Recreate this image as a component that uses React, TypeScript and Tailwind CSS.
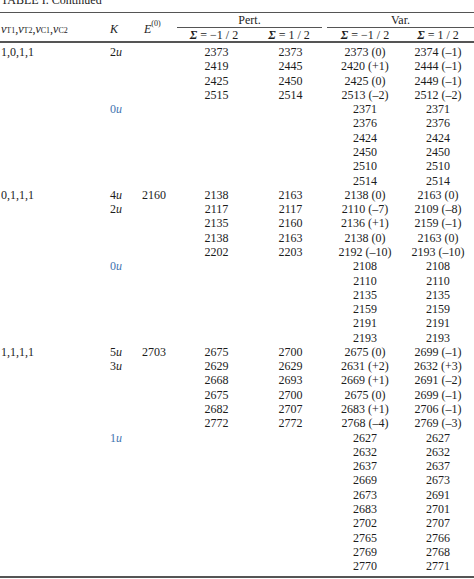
import type { ReactNode } from "react";

type Row = {
  v?: string;
  k?: string;
  e?: string;
  p1?: string;
  p2?: string;
  v1?: string;
  v2?: string;
  blue?: boolean;
};

const rows: Row[] = [
  { v: "1,0,1,1", k: "2", p1: "2373", p2: "2373", v1: "2373 (0)", v2: "2374 (–1)" },
  { p1: "2419", p2: "2445", v1: "2420 (+1)", v2: "2444 (–1)" },
  { p1: "2425", p2: "2450", v1: "2425 (0)", v2: "2449 (–1)" },
  { p1: "2515", p2: "2514", v1: "2513 (–2)", v2: "2512 (–2)" },
  { k: "0", blue: true, v1: "2371", v2: "2371" },
  { v1: "2376", v2: "2376" },
  { v1: "2424", v2: "2424" },
  { v1: "2450", v2: "2450" },
  { v1: "2510", v2: "2510" },
  { v1: "2514", v2: "2514" },
  { v: "0,1,1,1", k: "4", e: "2160", p1: "2138", p2: "2163", v1: "2138 (0)", v2: "2163 (0)" },
  { k: "2", p1: "2117", p2: "2117", v1: "2110 (–7)", v2: "2109 (–8)" },
  { p1: "2135", p2: "2160", v1: "2136 (+1)", v2: "2159 (–1)" },
  { p1: "2138", p2: "2163", v1: "2138 (0)", v2: "2163 (0)" },
  { p1: "2202", p2: "2203", v1: "2192 (–10)", v2: "2193 (–10)" },
  { k: "0", blue: true, v1: "2108", v2: "2108" },
  { v1: "2110", v2: "2110" },
  { v1: "2135", v2: "2135" },
  { v1: "2159", v2: "2159" },
  { v1: "2191", v2: "2191" },
  { v1: "2193", v2: "2193" },
  { v: "1,1,1,1", k: "5", e: "2703", p1: "2675", p2: "2700", v1: "2675 (0)", v2: "2699 (–1)" },
  { k: "3", p1: "2629", p2: "2629", v1: "2631 (+2)", v2: "2632 (+3)" },
  { p1: "2668", p2: "2693", v1: "2669 (+1)", v2: "2691 (–2)" },
  { p1: "2675", p2: "2700", v1: "2675 (0)", v2: "2699 (–1)" },
  { p1: "2682", p2: "2707", v1: "2683 (+1)", v2: "2706 (–1)" },
  { p1: "2772", p2: "2772", v1: "2768 (–4)", v2: "2769 (–3)" },
  { k: "1", blue: true, v1: "2627", v2: "2627" },
  { v1: "2632", v2: "2632" },
  { v1: "2637", v2: "2637" },
  { v1: "2669", v2: "2673" },
  { v1: "2673", v2: "2691" },
  { v1: "2683", v2: "2701" },
  { v1: "2702", v2: "2707" },
  { v1: "2765", v2: "2766" },
  { v1: "2769", v2: "2768" },
  { v1: "2770", v2: "2771" },
];

const cols = "grid grid-cols-[110px_32px_38px_73px_75px_74px_72px]";

function Sigma({ half }: { half: string }) {
  return (
    <span className="whitespace-pre">
      <i className="font-bold">Σ</i>
      {` = ${half} / 2`}
    </span>
  );
}

function V({ sub }: { sub: ReactNode }) {
  return (
    <>
      <i>v</i>
      <sub className="text-[8px] align-[-2px]">{sub}</sub>
    </>
  );
}

export default function App() {
  return (
    <div className="w-[474px] h-[579px] overflow-hidden bg-white text-[12px] text-[#1c1c1c] font-['Liberation_Serif','Times_New_Roman',serif]">
      <div className="-mt-[7px] leading-[14px] pl-[1px]">TABLE I. Continued</div>

      {/* 表头 */}
      <div className={`${cols} mt-[5px] h-[31px] border-t-[1.5px] border-b-[2px] border-[#555]`}>
        <div className="row-span-2 flex items-center pl-[1px] pt-[2px]">
          <V sub="T1" />,<V sub="T2" />,<V sub="C1" />,<V sub="C2" />
        </div>
        <div className="row-span-2 flex items-center pt-[2px]">
          <i>K</i>
        </div>
        <div className="row-span-2 flex items-center pl-[2px] pt-[1px]">
          <i>E</i>
          <sup className="text-[8px] -top-[5px]">(0)</sup>
        </div>
        <div className="col-span-2 -ml-[3px] mr-[6px] h-[15px] leading-[14px] text-center border-b border-[#555]">
          Pert.
        </div>
        <div className="col-span-2 -ml-[1px] h-[15px] leading-[14px] text-center border-b border-[#555]">
          Var.
        </div>
        <div className="leading-[15px] text-center -ml-[5px]">
          <Sigma half="−1" />
        </div>
        <div className="leading-[15px] text-center -ml-[3px]">
          <Sigma half="1" />
        </div>
        <div className="leading-[15px] text-center">
          <Sigma half="−1" />
        </div>
        <div className="leading-[15px] text-center">
          <Sigma half="1" />
        </div>
      </div>

      {/* 数据行 */}
      <div className="pt-[2px]">
        {rows.map((r, i) => (
          <div key={i} className={`${cols} h-[14.29px] leading-[14.29px] whitespace-nowrap`}>
            <div className="pl-[1px]">{r.v}</div>
            <div className={r.blue ? "text-[#3f74b0]" : ""}>
              {r.k && (
                <>
                  {r.k}
                  <i>u</i>
                </>
              )}
            </div>
            <div>{r.e}</div>
            <div className="text-center">{r.p1}</div>
            <div className="text-center">{r.p2}</div>
            <div className="text-center">{r.v1}</div>
            <div className="text-center">{r.v2}</div>
          </div>
        ))}
      </div>
      <div className="mt-[3px] border-t-[2px] border-[#555]" />
    </div>
  );
}
